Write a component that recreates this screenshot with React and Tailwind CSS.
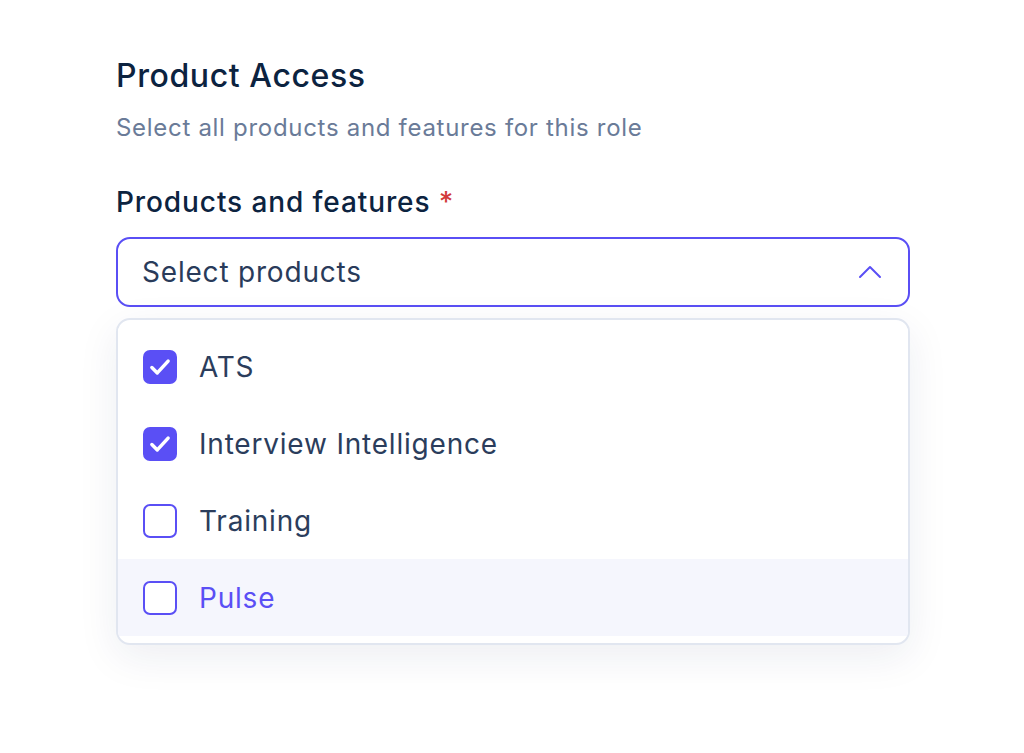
import React, { useState } from 'react';

const items = [
    { name: 'ATS', checked: true },
    { name: 'Interview Intelligence', checked: true },
    { name: 'Training', checked: false },
    { name: 'Pulse', checked: false, hover: true },
];

function Checkbox({ checked }) {
    if (checked) {
        return (
            <span className="flex h-[34px] w-[34px] shrink-0 items-center justify-center rounded-[7px] bg-[#5a4ff5]">
                <svg width="26" height="26" viewBox="0 0 24 24" fill="none">
                    <path d="M4.5 12.5l5 5L19.5 6.5" stroke="white" strokeWidth="3.2" strokeLinecap="round" strokeLinejoin="round" />
                </svg>
            </span>
        );
    }
    return <span className="h-[34px] w-[34px] shrink-0 rounded-[7px] border-2 border-[#5a4ff5] bg-white" />;
}

export default function App() {
    const [list, setList] = useState(items);

    const toggle = (i) => {
        setList(list.map((it, idx) => (idx === i ? { ...it, checked: !it.checked } : it)));
    };

    return (
        <div className="min-h-[753px] w-full bg-white" style={{ fontFamily: 'Inter, "Noto Sans", sans-serif' }}>
            <div className="ml-[116px] w-[794px] pt-[56px]">
                <h1 className="text-[32px] font-medium leading-[40px] tracking-[0.6px] text-[#0c2340]">Product Access</h1>
                <p className="mt-[16px] text-[24px] leading-[32px] tracking-[0.7px] text-[#6a7b98]">
                    Select all products and features for this role
                </p>
                <div className="mt-[40px] text-[28px] font-medium leading-[36px] tracking-[0.9px] text-[#0c2340]">
                    Products and features <span className="text-[#d23a3a]">*</span>
                </div>
                <button
                    type="button"
                    className="mt-[17px] flex h-[70px] w-full items-center justify-between rounded-[14px] border-2 border-[#5a4ff5] bg-white pl-[24px] pr-[26px]"
                >
                    <span className="text-[28px] tracking-[0.8px] text-[#293b5a]">Select products</span>
                    <svg width="24" height="14" viewBox="0 0 24 14" fill="none">
                        <path d="M2 12L12 2l10 10" stroke="#5a4ff5" strokeWidth="2" strokeLinecap="round" strokeLinejoin="round" />
                    </svg>
                </button>
                <div className="mt-[11px] overflow-hidden rounded-[14px] border-2 border-[#e1e6f0] bg-white pt-[8px] pb-[7px] shadow-[0_12px_40px_rgba(30,40,90,0.08)]">
                    {list.map((it, i) => (
                        <div
                            key={it.name}
                            onClick={() => toggle(i)}
                            className={
                                'flex h-[77px] cursor-pointer items-center gap-[22px] px-[25px] ' +
                                (it.hover ? 'bg-[#f5f6fd]' : 'bg-white')
                            }
                        >
                            <Checkbox checked={it.checked} />
                            <span
                                className={
                                    'text-[28px] tracking-[0.8px] ' + (it.hover ? 'text-[#5a4ff5]' : 'text-[#2b3d5c]')
                                }
                            >
                                {it.name}
                            </span>
                        </div>
                    ))}
                </div>
            </div>
        </div>
    );
}
